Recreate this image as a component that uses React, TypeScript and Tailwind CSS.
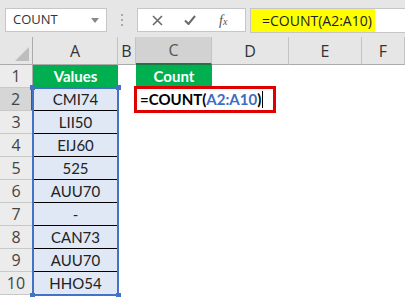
import React from 'react';

const cols = ['A', 'B', 'C', 'D', 'E', 'F'];
const values = ['CMI74', 'LII50', 'EIJ60', '525', 'AUU70', '-', 'CAN73', 'AUU70', 'HHO54'];

const ui = { fontFamily: '"Open Sans", "Noto Sans", sans-serif' };
const cell = { fontFamily: 'Lato, "Liberation Sans", sans-serif' };

const Toolbar: React.FC = () => (
  <div className="flex h-[37px] items-start bg-[#e6e6e6] pt-[8px] pl-[5px]" style={ui}>
    <div className="flex h-[24px] w-[102px] items-center justify-between border border-[#c6c6c6] bg-white pl-[7px] pr-[7px] text-[13px] text-[#333]">
      <span>COUNT</span>
      <svg width="8" height="5" viewBox="0 0 8 5"><path d="M0 0h8L4 5z" fill="#888" /></svg>
    </div>
    <div className="flex h-[24px] w-[30px] flex-col items-center justify-center gap-[3px]">
      <span className="h-[2px] w-[2px] bg-[#aaa]" />
      <span className="h-[2px] w-[2px] bg-[#aaa]" />
      <span className="h-[2px] w-[2px] bg-[#aaa]" />
    </div>
    <div className="flex h-[24px] w-[109px] items-center border border-[#c6c6c6] bg-white pl-[14px]">
      <svg width="11" height="11" viewBox="0 0 11 11"><path d="M1 1l9 9M10 1l-9 9" stroke="#6a6a6a" strokeWidth="1.6" /></svg>
      <svg className="ml-[21px]" width="12" height="10" viewBox="0 0 12 10"><path d="M1 5.5l3.5 3.5L11 1" stroke="#6a6a6a" strokeWidth="2" fill="none" /></svg>
      <span className="ml-[23px] text-[14px] italic text-[#555]" style={{ fontFamily: '"Liberation Serif", serif' }}>
        f<span className="text-[10px]">x</span>
      </span>
    </div>
    <div className="ml-[4px] flex h-[25px] flex-1 border-y border-l border-[#c6c6c6] bg-white">
      <div className="flex w-[124px] items-center bg-[#ffff00] pl-[11px] text-[14px] text-[#222]">=COUNT(A2:A10)</div>
    </div>
  </div>
);

const App: React.FC = () => {
  return (
    <div className="h-[297px] w-[405px] overflow-hidden bg-white">
      <Toolbar />
      <div className="relative grid grid-cols-[33px_85px_18px_76px_77px_73px_1fr] grid-rows-[28px_repeat(10,23px)]">
        {/* corner */}
        <div className="relative border-b border-r border-[#ababab] bg-[#e6e6e6]">
          <svg className="absolute bottom-[3px] right-[3px]" width="14" height="14" viewBox="0 0 14 14"><path d="M14 0v14H0z" fill="#bdbdbd" /></svg>
        </div>
        {cols.map(c => (
          <div
            key={c}
            className={`flex items-center justify-center border-r border-[#c4c4c4] text-[16px] ${c === 'C' ? 'border-b-2 border-b-[#217346] bg-[#d2d2d2] text-[#555]' : 'border-b border-b-[#ababab] bg-[#e6e6e6] text-[#333]'}`}
            style={ui}
          >
            {c}
          </div>
        ))}

        {Array.from({ length: 10 }).map((_, i) => {
          const r = i + 1;
          return (
            <React.Fragment key={r}>
              <div
                className={`flex items-center justify-center border-b border-[#c8c8c8] text-[16px] text-[#444] ${r === 2 ? 'border-r-2 border-r-[#217346] bg-[#d6d6d6]' : 'border-r border-r-[#ababab] bg-[#ececec]'}`}
                style={ui}
              >
                {r}
              </div>
              {r === 1 ? (
                <div className="flex items-center justify-center bg-[#00b050] text-[15px] font-bold text-white" style={cell}>Values</div>
              ) : (
                <div
                  className={`flex items-center justify-center bg-[#dfe8f4] text-[15px] text-[#222] ${r < 10 ? 'border-b border-black' : ''}`}
                  style={cell}
                >
                  {values[i - 1]}
                </div>
              )}
              <div />
              {r === 1 ? (
                <div className="flex items-center justify-center bg-[#00b050] text-[15px] font-bold text-white" style={cell}>Count</div>
              ) : (
                <div />
              )}
              <div />
              <div />
              <div />
            </React.Fragment>
          );
        })}

        {/* range selection A2:A10 */}
        <div className="pointer-events-none absolute left-[32px] top-[50px] h-[209px] w-[87px] border-2 border-[#4472c4]">
          <span className="absolute -left-[4px] -top-[4px] h-[5px] w-[5px] bg-[#4472c4]" />
          <span className="absolute -right-[4px] -top-[4px] h-[5px] w-[5px] bg-[#4472c4]" />
          <span className="absolute -bottom-[4px] -left-[4px] h-[5px] w-[5px] bg-[#4472c4]" />
          <span className="absolute -bottom-[4px] -right-[4px] h-[5px] w-[5px] bg-[#4472c4]" />
        </div>

        {/* edit box in C2 */}
        <div className="absolute left-[134px] top-[49px] flex h-[27px] w-[142px] items-center border-[3px] border-[#e00000] bg-white pl-[3px] text-[15px] font-bold text-black" style={cell}>
          <span>=COUNT(</span>
          <span className="text-[#3b6cc6]">A2:A10</span>
          <span>)</span>
          <span className="ml-[1px] h-[17px] w-[1px] bg-black" />
        </div>
      </div>
    </div>
  );
};

export default App;
